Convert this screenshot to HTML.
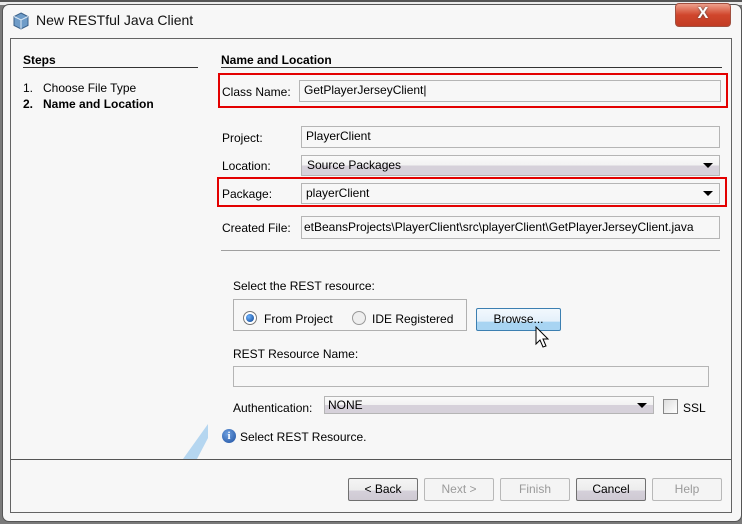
<!DOCTYPE html>
<html><head><meta charset="utf-8"><style>
*{margin:0;padding:0;box-sizing:border-box}
body{width:742px;height:524px;overflow:hidden;background:#7a7a7a;font-family:"Liberation Sans",sans-serif;font-size:12px;color:#000;position:relative}
.a{position:absolute}
.win{left:2px;top:4px;width:740px;height:518px;background:#f7f7f7;border:1px solid #555;border-radius:7px}
.inp{background:#f7f7f7;border:1px solid #b5b5b5;padding-left:4px;line-height:19px;white-space:nowrap;overflow:hidden}
.cmb{background:linear-gradient(#fafafa 0,#f2f2f2 50%,#d6d1da 51%,#d6d1da 100%);border:1px solid #b5b5b5;padding-left:5px;line-height:18px}
.arr{position:absolute;right:6px;top:7px;width:0;height:0;border-left:5px solid transparent;border-right:5px solid transparent;border-top:5px solid #000}
.red{border:2px solid #e30000}
.btn{border:1px solid #707070;border-radius:2px;background:linear-gradient(#f4f4f4 0,#ececec 55%,#d5d0da 56%,#cfcad3 100%);text-align:center;line-height:20px;height:23px;width:70px;top:478px}
.dis{border-color:#b8b8b8;background:#f4f4f4;color:#9a9a9a}
</style></head><body>
<div class="a" style="left:0;top:0;width:742px;height:5px;background:#ececec;border-top:2px solid #555"></div>
<div class="a win"></div>
<svg class="a" style="left:13px;top:12px" width="16" height="18" viewBox="0 0 16 18"><path d="M8 1 L15 4.5 L15 13.5 L8 17 L1 13.5 L1 4.5 Z" fill="#6f9cc8" stroke="#3a5f88"/><path d="M1 4.5 L8 8 L15 4.5 M8 8 L8 17" fill="none" stroke="#dde9f5"/></svg>
<div class="a" style="left:36px;top:12px;font-size:14px;color:#111">New RESTful Java Client</div>
<div class="a" style="left:675px;top:3px;width:56px;height:24px;border:1px solid #a05040;border-radius:4px;background:linear-gradient(#eea08c,#d0462c 50%,#c23c24)"></div>
<div class="a" style="left:675px;top:5px;width:56px;text-align:center;color:#fff;font-weight:bold;font-size:16px;text-shadow:0 0 2px #444">X</div>
<div class="a" style="left:10px;top:38px;width:722px;height:475px;border:1px solid #646464"></div>
<div class="a" style="left:11px;top:459px;width:720px;height:1px;background:#555"></div>
<div class="a" style="left:23px;top:53px;font-weight:bold">Steps</div>
<div class="a" style="left:23px;top:67px;width:175px;height:1px;background:#333"></div>
<div class="a" style="left:23px;top:81px">1.&nbsp;&nbsp;&nbsp;Choose File Type</div>
<div class="a" style="left:23px;top:97px;font-weight:bold">2.&nbsp;&nbsp;&nbsp;Name and Location</div>
<div class="a" style="left:221px;top:53px;font-weight:bold">Name and Location</div>
<div class="a" style="left:221px;top:67px;width:501px;height:1px;background:#333"></div>
<div class="a red" style="left:218px;top:73px;width:510px;height:35px"></div>
<div class="a" style="left:222px;top:85px">Class Name:</div>
<div class="a inp" style="left:299px;top:80px;width:422px;height:22px;background:#f7f7f7">GetPlayerJerseyClient|</div>
<div class="a" style="left:222px;top:131px">Project:</div>
<div class="a inp" style="left:301px;top:126px;width:419px;height:22px">PlayerClient</div>
<div class="a" style="left:222px;top:159px">Location:</div>
<div class="a cmb" style="left:301px;top:155px;width:419px;height:21px">Source Packages<span class="arr"></span></div>
<div class="a red" style="left:217px;top:177px;width:510px;height:30px"></div>
<div class="a" style="left:222px;top:187px">Package:</div>
<div class="a inp" style="left:301px;top:183px;width:419px;height:21px">playerClient<span class="arr"></span></div>
<div class="a" style="left:222px;top:221px">Created File:</div>
<div class="a inp" style="left:301px;top:216px;width:419px;height:23px;padding-left:2px;line-height:21px">etBeansProjects\PlayerClient\src\playerClient\GetPlayerJerseyClient.java</div>
<div class="a" style="left:221px;top:250px;width:499px;height:1px;background:#a0a0a0"></div>
<div class="a" style="left:233px;top:279px">Select the REST resource:</div>
<div class="a" style="left:233px;top:299px;width:234px;height:32px;border:1px solid #b0b0b0"></div>
<div class="a" style="left:243px;top:311px;width:14px;height:14px;border-radius:50%;border:1px solid #777;background:#fff"></div>
<div class="a" style="left:246px;top:314px;width:8px;height:8px;border-radius:50%;background:radial-gradient(circle at 35% 35%,#6fb3ff,#0a3f8a)"></div>
<div class="a" style="left:264px;top:312px">From Project</div>
<div class="a" style="left:352px;top:311px;width:14px;height:14px;border-radius:50%;border:1px solid #999;background:#eee"></div>
<div class="a" style="left:372px;top:312px">IDE Registered</div>
<div class="a" style="left:476px;top:308px;width:85px;height:23px;border:1px solid #3c7fb1;border-radius:2px;background:linear-gradient(#f2f8fd 0,#e4f0fa 60%,#a8d4f2 61%,#a8d4f2 100%);text-align:center;line-height:21px">Browse...</div>
<svg class="a" style="left:535px;top:326px" width="16" height="24" viewBox="0 0 16 24"><path d="M1 1 L1 18 L5 14 L8 21 L11 20 L8 13 L13 13 Z" fill="#fff" stroke="#000"/></svg>
<div class="a" style="left:233px;top:347px">REST Resource Name:</div>
<div class="a inp" style="left:233px;top:366px;width:476px;height:21px"></div>
<div class="a" style="left:233px;top:401px">Authentication:</div>
<div class="a cmb" style="left:324px;top:396px;width:330px;height:18px;line-height:17px;padding-left:3px">NONE<span class="arr" style="top:6px"></span></div>
<div class="a" style="left:663px;top:399px;width:15px;height:15px;border:1px solid #888;background:linear-gradient(135deg,#ddd,#fff)"></div>
<div class="a" style="left:683px;top:401px">SSL</div>
<div class="a" style="left:222px;top:429px;width:14px;height:14px;border-radius:50%;background:radial-gradient(circle at 40% 35%,#6fa0e0,#1c4fa0);color:#fff;font-weight:bold;font-size:11px;text-align:center;line-height:14px;font-family:'Liberation Serif',serif">i</div>
<div class="a" style="left:240px;top:430px">Select REST Resource.</div>
<svg class="a" style="left:183px;top:424px" width="28" height="36"><path d="M25 0 L25 14 L14 35 L0 35 Z" fill="#b5d6f0"/></svg>
<div class="a btn" style="left:348px">&lt; Back</div>
<div class="a btn dis" style="left:424px">Next &gt;</div>
<div class="a btn dis" style="left:500px">Finish</div>
<div class="a btn" style="left:576px">Cancel</div>
<div class="a btn dis" style="left:652px">Help</div>
</body></html>
